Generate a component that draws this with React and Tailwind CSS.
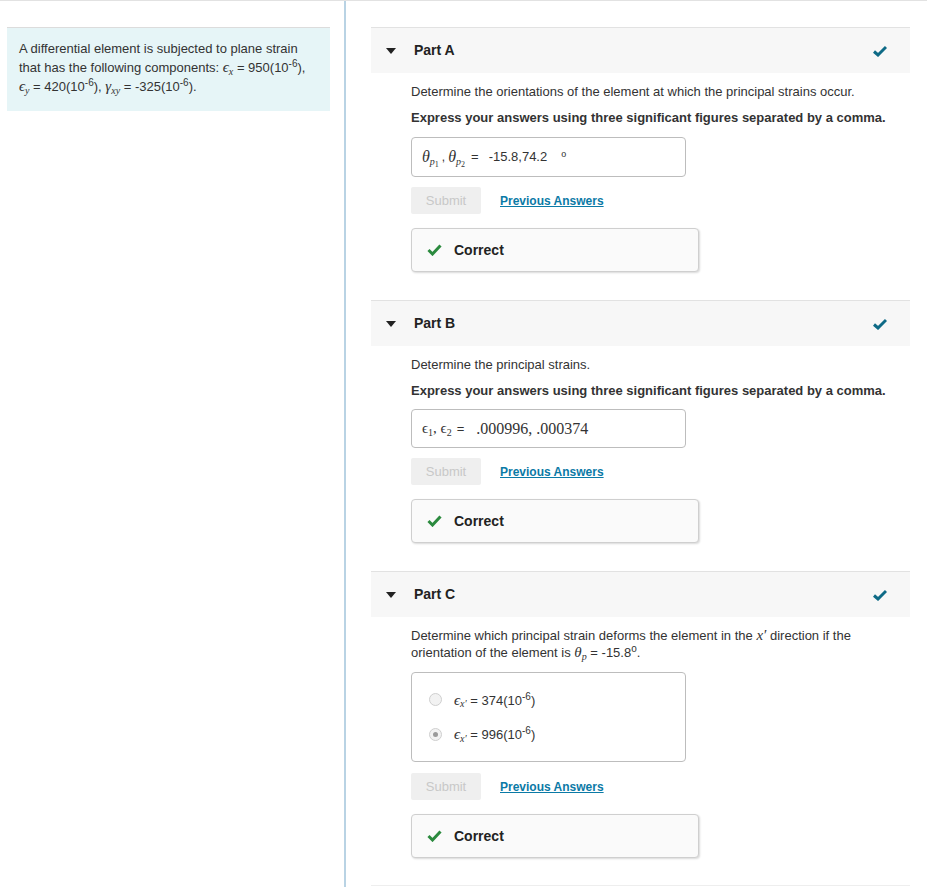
import React from "react";

const sans = { fontFamily: '"Liberation Sans", Arial, sans-serif' };
const serif = { fontFamily: '"Liberation Serif", "DejaVu Serif", serif' };

const M = ({ children, className = "" }) => (
  <i className={`text-[15px] ${className}`} style={serif}>
    {children}
  </i>
);

const Sup = ({ children }) => <sup className="text-[10px]">{children}</sup>;

const HeaderCheck = () => (
  <svg width="14" height="12" viewBox="0 0 14 12">
    <path d="M1 6.5 L5 10 L13 2" fill="none" stroke="#0e6a86" strokeWidth="3" />
  </svg>
);

const GreenCheck = () => (
  <svg width="15" height="12" viewBox="0 0 15 12">
    <path d="M1.5 6 L5.5 10 L13.5 1.5" fill="none" stroke="#2b8a3e" strokeWidth="3" />
  </svg>
);

function PartHeader({ label }) {
  return (
    <div className="flex h-[46px] items-center border-t border-[#e2e2e2] bg-[#f7f7f7] pl-[15px] pr-[23px]">
      <svg width="10" height="6" viewBox="0 0 10 6" className="mt-[1px]">
        <path d="M0 0 L10 0 L5 6 Z" fill="#222" />
      </svg>
      <span className="ml-[18px] text-[14px] font-bold text-[#222]">{label}</span>
      <span className="ml-auto">
        <HeaderCheck />
      </span>
    </div>
  );
}

function SubmitRow() {
  return (
    <div className="flex items-center">
      <div className="flex h-[27px] w-[70px] items-center justify-center rounded-[2px] bg-[#efefef] text-[13px] text-[#c8c8c8]">
        Submit
      </div>
      <a className="ml-[19px] text-[12px] font-bold text-[#0b7aa6] underline">Previous Answers</a>
    </div>
  );
}

function Correct() {
  return (
    <div className="flex h-[44px] w-[288px] items-center rounded-[4px] border border-[#cfcfcf] bg-[#fafafa] pl-[15px] shadow-[1px_1px_2px_rgba(0,0,0,0.15)]">
      <GreenCheck />
      <span className="ml-[12px] text-[14px] font-bold text-[#222]">Correct</span>
    </div>
  );
}

function Radio({ checked }) {
  return (
    <span className="flex h-[13px] w-[13px] items-center justify-center rounded-full border border-[#cfcfcf] bg-[#f2f2f2]">
      {checked && <span className="h-[5px] w-[5px] rounded-full bg-[#9a9a9a]" />}
    </span>
  );
}

export default function App() {
  return (
    <div className="flex min-h-[887px] w-[927px] border-t border-[#e2e2e2] bg-white text-[#333]" style={sans}>
      <div className="w-[344px] shrink-0 pl-[7px] pr-[14px] pt-[26px]">
        <div className="border-t border-[#dcdcdc] bg-[#e6f5f7] px-[12px] pb-[15px] pt-[11px] text-[13px] leading-[19px]">
          A differential element is subjected to plane strain
          <br />
          that has the following components: <M className="text-[14px]">ϵ<sub className="text-[10px]">x</sub></M> = 950(10
          <Sup>-6</Sup>),
          <br />
          <M className="text-[14px]">ϵ<sub className="text-[10px]">y</sub></M> = 420(10<Sup>-6</Sup>),{" "}
          <M className="text-[14px]">γ<sub className="text-[10px]">xy</sub></M> = -325(10<Sup>-6</Sup>).
        </div>
      </div>

      <div className="w-[2px] shrink-0 bg-[#b9d3e4]" />

      <div className="w-[564px] shrink-0 pl-[25px] pt-[26px]">
        {/* Part A */}
        <PartHeader label="Part A" />
        <div className="pl-[40px]">
          <p className="mt-[11px] text-[13px] leading-[16px]">
            Determine the orientations of the element at which the principal strains occur.
          </p>
          <p className="mt-[10px] text-[13px] font-bold leading-[16px]">
            Express your answers using three significant figures separated by a comma.
          </p>
          <div className="mt-[11px] flex h-[40px] w-[275px] items-center rounded-[4px] border border-[#bdbdbd] pl-[10px]">
            <M className="text-[16px]">
              θ<sub className="text-[10px]">p<sub className="text-[8px] not-italic">1</sub></sub>
            </M>
            <span className="mx-[3px] text-[12px]">,</span>
            <M className="text-[16px]">
              θ<sub className="text-[10px]">p<sub className="text-[8px] not-italic">2</sub></sub>
            </M>
            <span className="ml-[6px] text-[13px]">=</span>
            <span className="ml-[10px] text-[13px]">-15.8,74.2</span>
            <span className="ml-[14px] -mt-[8px] text-[10px]" style={serif}>o</span>
          </div>
          <div className="mt-[10px]">
            <SubmitRow />
          </div>
          <div className="mt-[14px]">
            <Correct />
          </div>
        </div>

        {/* Part B */}
        <div className="mt-[28px]">
          <PartHeader label="Part B" />
        </div>
        <div className="pl-[40px]">
          <p className="mt-[11px] text-[13px] leading-[16px]">Determine the principal strains.</p>
          <p className="mt-[10px] text-[13px] font-bold leading-[16px]">
            Express your answers using three significant figures separated by a comma.
          </p>
          <div className="mt-[10px] flex h-[39px] w-[275px] items-center rounded-[4px] border border-[#bdbdbd] pl-[10px]" style={serif}>
            <span className="text-[15px]">
              ϵ<sub className="text-[10px]">1</sub>, ϵ<sub className="text-[10px]">2</sub>
            </span>
            <span className="ml-[5px] text-[13px]" style={sans}>=</span>
            <span className="ml-[12px] text-[16px]">.000996, .000374</span>
          </div>
          <div className="mt-[10px]">
            <SubmitRow />
          </div>
          <div className="mt-[14px]">
            <Correct />
          </div>
        </div>

        {/* Part C */}
        <div className="mt-[28px]">
          <PartHeader label="Part C" />
        </div>
        <div className="pl-[40px]">
          <p className="mt-[10px] w-[470px] text-[13px] leading-[16px]">
            Determine which principal strain deforms the element in the <M className="text-[14px]">x′</M> direction if the
            <br />
            orientation of the element is{" "}
            <M className="text-[14px]">
              θ<sub className="text-[10px]">p</sub>
            </M>{" "}
            = -15.8<Sup>o</Sup>.
          </p>
          <div className="mt-[11px] flex h-[90px] w-[275px] flex-col justify-center gap-[12px] rounded-[4px] border border-[#bdbdbd] pl-[17px]">
            <div className="flex items-center text-[13px]">
              <Radio />
              <span className="ml-[12px]">
                <M className="text-[14px]">ϵ<sub className="text-[10px]">x′</sub></M> = 374(10<Sup>-6</Sup>)
              </span>
            </div>
            <div className="flex items-center text-[13px]">
              <Radio checked />
              <span className="ml-[12px]">
                <M className="text-[14px]">ϵ<sub className="text-[10px]">x′</sub></M> = 996(10<Sup>-6</Sup>)
              </span>
            </div>
          </div>
          <div className="mt-[11px]">
            <SubmitRow />
          </div>
          <div className="mt-[14px]">
            <Correct />
          </div>
        </div>
        <div className="mt-[27px] border-t border-[#eeeeee]" />
      </div>
    </div>
  );
}
